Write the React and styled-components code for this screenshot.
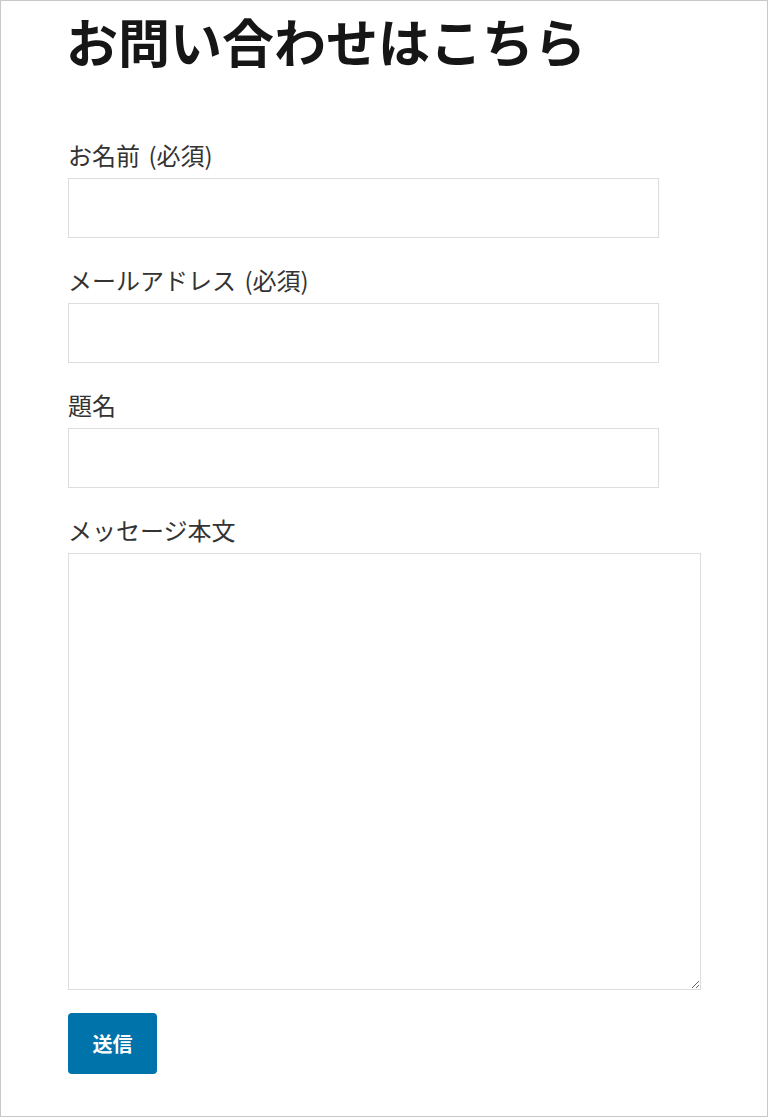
import React from 'react'
import styled, { createGlobalStyle } from 'styled-components'

const GlobalStyle = createGlobalStyle`
  html, body {
    margin: 0;
    padding: 0;
    background: #fff;
  }
  * {
    box-sizing: border-box;
  }
`

const Page = styled.div`
  width: 768px;
  height: 1117px;
  border: 1px solid #c8c8c8;
  background: #fff;
  padding: 9px 0 0 67px;
  font-family: "Noto Sans CJK JP", "Noto Sans", sans-serif;
  color: #333;
`

const Title = styled.h1`
  margin: 0 0 66px -2px;
  font-size: 52px;
  line-height: 62px;
  font-weight: 700;
  color: #161616;
`

const Form = styled.form`
  display: flex;
  flex-direction: column;
  gap: 25px;
`

const Field = styled.div`
  display: flex;
  flex-direction: column;
  gap: 6px;
`

const Label = styled.label`
  font-size: 24px;
  line-height: 34px;
  word-spacing: 3px;
  color: #333;
`

const Input = styled.input`
  width: 591px;
  height: 60px;
  border: 1px solid #dddddd;
  border-radius: 0;
  background: #fff;
  padding: 0 12px;
  font: inherit;
  font-size: 18px;
  outline: none;
`

const TextArea = styled.textarea`
  width: 633px;
  height: 437px;
  border: 1px solid #dddddd;
  background: #fff;
  padding: 12px;
  font: inherit;
  font-size: 18px;
  outline: none;
  resize: vertical;
  display: block;
`

const Submit = styled.button`
  align-self: flex-start;
  margin-top: -2px;
  width: 89px;
  height: 61px;
  border: none;
  border-radius: 4px;
  background: #0073aa;
  color: #fff;
  font-family: "Noto Sans CJK JP", sans-serif;
  font-size: 20px;
  font-weight: 700;
  cursor: pointer;
`

const fields = [
  { id: 'name', label: 'お名前 (必須)', type: 'text' },
  { id: 'email', label: 'メールアドレス (必須)', type: 'email' },
  { id: 'subject', label: '題名', type: 'text' },
]

const App = () => {
  return (
    <>
      <GlobalStyle />
      <Page>
        <Title>お問い合わせはこちら</Title>
        <Form onSubmit={e => e.preventDefault()}>
          {fields.map(f => (
            <Field key={f.id}>
              <Label htmlFor={f.id}>{f.label}</Label>
              <Input id={f.id} type={f.type} />
            </Field>
          ))}
          <Field>
            <Label htmlFor="message">メッセージ本文</Label>
            <TextArea id="message" />
          </Field>
          <Submit type="submit">送信</Submit>
        </Form>
      </Page>
    </>
  )
}

export default App
